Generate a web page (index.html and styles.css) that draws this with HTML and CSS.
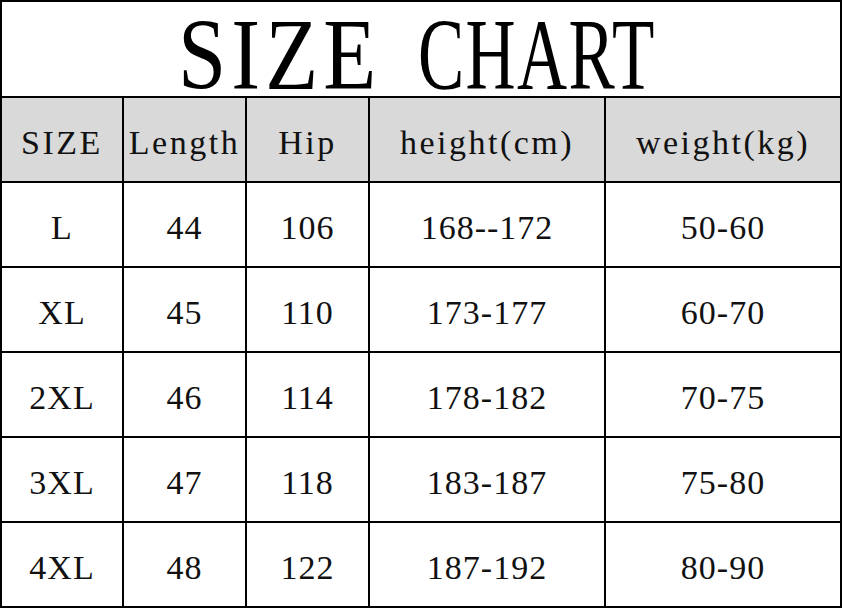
FILE: index.html
```html
<!DOCTYPE html>
<html>
<head>
<meta charset="utf-8">
<link rel="stylesheet" href="styles.css">
</head>
<body>
<div class="chart">
  <div class="title"><span class="word word-size">SIZE</span> <span class="word word-chart">CHART</span></div>
  <div class="cell head">SIZE</div>
  <div class="cell head">Length</div>
  <div class="cell head">Hip</div>
  <div class="cell head">height(cm)</div>
  <div class="cell head">weight(kg)</div>

  <div class="cell">L</div><div class="cell">44</div><div class="cell">106</div><div class="cell">168--172</div><div class="cell">50-60</div>
  <div class="cell">XL</div><div class="cell">45</div><div class="cell">110</div><div class="cell">173-177</div><div class="cell">60-70</div>
  <div class="cell">2XL</div><div class="cell">46</div><div class="cell">114</div><div class="cell">178-182</div><div class="cell">70-75</div>
  <div class="cell">3XL</div><div class="cell">47</div><div class="cell">118</div><div class="cell">183-187</div><div class="cell">75-80</div>
  <div class="cell">4XL</div><div class="cell">48</div><div class="cell">122</div><div class="cell">187-192</div><div class="cell">80-90</div>
</div>
</body>
</html>
```

FILE: styles.css
```css
html, body {
  margin: 0;
  padding: 0;
  background: #ffffff;
}

.chart {
  width: 842px;
  height: 608px;
  box-sizing: border-box;
  padding: 2px;
  background: #000000;
  display: grid;
  grid-template-columns: 120px 121px 121px 234px 234px;
  grid-template-rows: 94px repeat(6, 83px);
  gap: 2px;
  font-family: "Liberation Serif", "Times New Roman", serif;
  color: #000000;
}

.title {
  grid-column: 1 / -1;
  background: #ffffff;
  display: flex;
  justify-content: flex-start;
  align-items: flex-start;
  box-sizing: border-box;
  padding: 12px 0 0 176px;
  font-size: 102px;
  line-height: 82px;
  white-space: nowrap;
}

.word {
  display: inline-block;
  transform-origin: left center;
}

.word-size {
  letter-spacing: 6px;
  transform: scaleX(0.85);
}

.word-chart {
  letter-spacing: 2px;
  margin-left: 1px;
  transform: scaleX(0.68);
}

.cell {
  background: #ffffff;
  display: flex;
  justify-content: center;
  align-items: center;
  font-size: 34px;
  line-height: 1;
  padding-top: 6px;
  box-sizing: border-box;
  letter-spacing: 1px;
  white-space: nowrap;
  color: #111111;
}

.head {
  background: #d9d9d9;
  letter-spacing: 2.5px;
}
```
